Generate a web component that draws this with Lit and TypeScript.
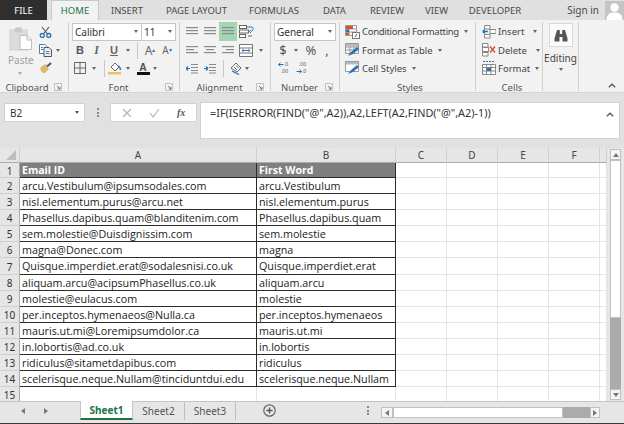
import { LitElement, html, css, svg } from "lit";
import { customElement } from "lit/decorators.js";

const ic = (w: number, h: number, body: any, cls = "") =>
  html`<svg class=${cls} width=${w} height=${h} viewBox="0 0 ${w} ${h}" fill="none">${body}</svg>`;

const caret = html`<span class="caret"></span>`;
const lines = (xs: number[][]) =>
  ic(12, 11, xs.map((p, i) => svg`<rect x=${p[0]} y=${i * 3 + 1} width=${p[1]} height="1.2" fill="#8a8a8a"/>`));

const launcher = html`<span class="launch">${ic(8, 8, svg`<path d="M.5.5H7.5V7.5H.5Z" stroke="#b5b5b5" stroke-width=".8"/><path d="M3 3L6 6M6 3.8V6H3.8" stroke="#666" stroke-width=".9"/>`)}</span>`;

const paste = ic(24, 25, svg`
  <rect x="1" y="4" width="17" height="20" fill="#dcdcdc" stroke="#cfcfcf"/>
  <rect x="6" y="1.5" width="7" height="5" fill="#c9c9c9"/>
  <path d="M11 9.5H18L22.5 14V23.5H11Z" fill="#fff" stroke="#bdbdbd"/>
  <path d="M18 9.5V14H22.5" stroke="#bdbdbd"/>`);
const scissors = ic(13, 12, svg`
  <path d="M3 1L8.5 8M10 1L4.5 8" stroke="#555" stroke-width="1.1"/>
  <circle cx="3.2" cy="9.5" r="2" stroke="#2a72b5" stroke-width="1.3"/>
  <circle cx="9.8" cy="9.5" r="2" stroke="#2a72b5" stroke-width="1.3"/>`);
const copy = ic(13, 13, svg`
  <path d="M.5.5H6L8 2.5V9.5H.5Z" fill="#fff" stroke="#4a7fb0"/>
  <path d="M5 3.5H10L12.5 6V12.5H5Z" fill="#e9f1f8" stroke="#555"/>
  <path d="M2 3.5H4M2 5.5H4M7 7.5H10.5M7 9.5H10.5" stroke="#4a7fb0"/>`);
const painter = ic(13, 12, svg`
  <path d="M1 6L6 2L10 7L5 11.5C3 11 1.5 8.5 1 6Z" fill="#e0b86c"/>
  <path d="M8 4.5L12 1" stroke="#555" stroke-width="2"/>`);
const borderIc = ic(12, 12, svg`<path d="M.5.5H11.5V11.5H.5ZM6 .5V11.5M.5 6H11.5" stroke="#666"/>`);
const fillIc = ic(14, 14, svg`
  <path d="M3 6L7 2L11 6L7 10Z" fill="#fff" stroke="#666"/>
  <path d="M10 5C12 6 12.5 7.5 12.5 9" stroke="#3a7cb8" stroke-width="1.5"/>
  <rect x="0" y="11" width="13" height="2.5" fill="#e8c75a"/>`);
const colorA = html`<span class="col-a">A</span>`;
const wrapIc = ic(15, 13, svg`
  <rect x=".5" y=".5" width="7" height="3" stroke="#666" fill="#fff"/>
  <rect x=".5" y="5" width="9" height="3" stroke="#666" fill="#fff"/>
  <rect x=".5" y="9.5" width="6" height="3" stroke="#666" fill="#fff"/>
  <path d="M8 2H13C14.5 2 14.5 6 12 6.5M12 5L10.5 6.5L12 8M9 11H13" stroke="#2a72b5"/>`);
const mergeIc = ic(14, 13, svg`
  <path d="M.5.5H13.5V12.5H.5ZM.5 4H13.5M.5 9H13.5" stroke="#777" fill="#fff"/>
  <path d="M3 6.5H11M3 6.5L4.5 5.2M3 6.5L4.5 7.8M11 6.5L9.5 5.2M11 6.5L9.5 7.8" stroke="#2a72b5"/>`);
const indentL = ic(12, 11, svg`<path d="M5 1.5H12M5 4.5H12M5 7.5H12M5 10H12" stroke="#8a8a8a"/><path d="M0 5.5H4M0 5.5L2 3.5M0 5.5L2 7.5" stroke="#2a72b5" stroke-width="1.2"/>`);
const indentR = ic(12, 11, svg`<path d="M5 1.5H12M5 4.5H12M5 7.5H12M5 10H12" stroke="#8a8a8a"/><path d="M0 5.5H4M4 5.5L2 3.5M4 5.5L2 7.5" stroke="#2a72b5" stroke-width="1.2"/>`);
const orient = ic(13, 13, svg`<path d="M1 6L6 1L11 6L7 10Z" stroke="#666" fill="#fff"/><path d="M2 9L9 12.5" stroke="#2a72b5" stroke-width="1.3"/><path d="M4 5L7 8M6 3.5L9 6.5" stroke="#666"/>`);
const decInc = html`<span class="dec"><span class="dl"><svg width="6" height="5" viewBox="0 0 6 5" fill="none"><path d="M.5 2.5H5.5M.5 2.5L2.5 .7M.5 2.5L2.5 4.3" stroke="#2a72b5"/></svg>.0</span><span class="dl">.00</span></span>`;
const decDec = html`<span class="dec"><span class="dl">.00</span><span class="dl"><svg width="6" height="5" viewBox="0 0 6 5" fill="none"><path d="M.5 2.5H5.5M5.5 2.5L3.5 .7M5.5 2.5L3.5 4.3" stroke="#2a72b5"/></svg>.0</span></span>`;
const condIc = ic(15, 14, svg`
  <path d="M.5.5H11.5V10.5H.5ZM.5 4H11.5M.5 7H11.5M4 .5V10.5" stroke="#999" fill="#fff"/>
  <rect x="1" y="1" width="7" height="3" fill="#d8502c"/><rect x="1" y="4.5" width="3" height="2.5" fill="#2a72b5"/><rect x="1" y="7.5" width="3" height="2.5" fill="#d8502c"/>
  <rect x="7.5" y="7.5" width="7" height="6" fill="#fff" stroke="#777"/><path d="M10 12L12 9" stroke="#555"/>`);
const tableIc = ic(15, 14, svg`
  <path d="M.5.5H13.5V10.5H.5ZM.5 4H13.5M.5 7H13.5M5 .5V10.5M9 .5V10.5" stroke="#999" fill="#f4f4f4"/>
  <rect x="1" y="1" width="12" height="2.5" fill="#bbb"/>
  <path d="M3 13L6 9L12 4L14 6L8 11Z" fill="#2a72b5"/>`);
const styleIc = ic(15, 14, svg`
  <path d="M.5.5H13.5V10.5H.5Z" stroke="#999" fill="#fff"/><rect x="1" y="1" width="12" height="2.5" fill="#bbb"/>
  <path d="M3 13L6 9L12 4L14 6L8 11Z" fill="#2a72b5"/>`);
const cell3 = (x: number, y: number) => svg`<path d="M${x}.5 ${y}.5H${x + 6}V${y + 4}H${x}.5Z" stroke="#888" fill="#fff"/>`;
const insertIc = ic(14, 14, svg`${cell3(2, 0)}${cell3(2, 9)}<rect x="8" y="4.5" width="6" height="4" stroke="#888" fill="#fff"/><path d="M.5 6.5H6M.5 6.5L3 4.5M.5 6.5L3 8.5" stroke="#2a72b5" stroke-width="1.3"/>`);
const deleteIc = ic(14, 14, svg`${cell3(0, 0)}${cell3(0, 9)}<rect x=".5" y="4.5" width="6" height="4" stroke="#888" fill="#fff"/><path d="M8 3.5L13 9.5M13 3.5L8 9.5" stroke="#d8502c" stroke-width="1.4"/>`);
const formatIc = ic(14, 14, svg`<path d="M1 .5H13" stroke="#2a72b5" stroke-dasharray="2 1"/><path d="M.5 3.5H13.5V13.5H.5ZM.5 6.5H13.5M.5 10H13.5M4.5 3.5V13.5M9 3.5V13.5" stroke="#888" fill="#fff"/><rect x="5" y="7" width="4" height="3" fill="#2a72b5"/>`);
const binoc = ic(14, 13, svg`<path d="M3 1H5.8V5H8.2V1H11L13.5 9.5V12.5H8.5V8H5.5V12.5H.5V9.5Z" fill="#555"/>`);
const person = ic(19, 19, svg`<circle cx="9.5" cy="6.5" r="4.2" fill="#fff"/><path d="M1.5 19C1.5 13 5 11.5 9.5 11.5S17.5 13 17.5 19Z" fill="#fff"/>`);
const corner = ic(10, 10, svg`<path d="M10 0V10H0Z" fill="#bdbdbd"/>`);
const crossIc = ic(10, 10, svg`<path d="M1 1L9 9M9 1L1 9" stroke="#b5b5b5" stroke-width="1.2"/>`);
const checkIc = ic(11, 10, svg`<path d="M1 5L4 9L10 1" stroke="#b5b5b5" stroke-width="1.2"/>`);
const chevron = ic(8, 5, svg`<path d="M.8 4.2L4 1.2L7.2 4.2" stroke="#555" stroke-width="1.3"/>`);
const plusIc = ic(13, 13, svg`<circle cx="6.5" cy="6.5" r="5.7" stroke="#666" stroke-width="1.2"/><path d="M3.5 6.5H9.5M6.5 3.5V9.5" stroke="#555" stroke-width="1.3"/>`);
const tri = (d: string) => ic(6, 6, svg`<path d=${d} fill="#777"/>`);

const TABS: [string, number][] = [["INSERT", 56], ["PAGE LAYOUT", 83], ["FORMULAS", 72], ["DATA", 49], ["REVIEW", 56], ["VIEW", 43], ["DEVELOPER", 74]];
const ROWS: [string, string][] = [
  ["Email ID", "First Word"],
  ["arcu.Vestibulum@ipsumsodales.com", "arcu.Vestibulum"],
  ["nisl.elementum.purus@arcu.net", "nisl.elementum.purus"],
  ["Phasellus.dapibus.quam@blanditenim.com", "Phasellus.dapibus.quam"],
  ["sem.molestie@Duisdignissim.com", "sem.molestie"],
  ["magna@Donec.com", "magna"],
  ["Quisque.imperdiet.erat@sodalesnisi.co.uk", "Quisque.imperdiet.erat"],
  ["aliquam.arcu@acipsumPhasellus.co.uk", "aliquam.arcu"],
  ["molestie@eulacus.com", "molestie"],
  ["per.inceptos.hymenaeos@Nulla.ca", "per.inceptos.hymenaeos"],
  ["mauris.ut.mi@Loremipsumdolor.ca", "mauris.ut.mi"],
  ["in.lobortis@ad.co.uk", "in.lobortis"],
  ["ridiculus@sitametdapibus.com", "ridiculus"],
  ["scelerisque.neque.Nullam@tinciduntdui.edu", "scelerisque.neque.Nullam"],
];

@customElement("app-root")
export class AppRoot extends LitElement {
  static styles = css`
    :host { display: block; width: 624px; height: 424px; overflow: hidden; background: #e1e1e1; color: #444;
      font-family: "Noto Sans", "Open Sans", sans-serif; font-size: 10px; }
    * { box-sizing: border-box; }
    svg { display: block; flex: none; }
    .tabs { display: flex; height: 20px; background: #e0e0e0; align-items: stretch; font-size: 9.5px; color: #4a4a4a; }
    .tab { display: flex; align-items: center; justify-content: center; }
    .file { width: 47px; margin-right: 4px; background: #2f2f2f; color: #fff; }
    .home { width: 48px; background: #f2f2f2; color: #217346; border: 1px solid #c9c9c9; border-bottom: 0; }
    .signin { margin-left: auto; display: flex; align-items: center; gap: 6px; font-size: 10px; }
    .avatar { background: #c4c4c4; width: 19px; height: 19px; }

    .ribbon { display: flex; height: 73px; background: #f2f2f2; border-bottom: 1px solid #d4d4d4; }
    .g { display: flex; flex-direction: column; border-right: 1px solid #d0d0d0; margin: 2px 0 1px; flex: none; }
    .body { height: 56px; display: flex; flex-direction: column; flex: none; }
    .lab { display: flex; align-items: center; height: 14px; margin-top: 1px; padding-top: 2px; font-size: 9.5px; color: #555; }
    .lab > span:first-child { flex: 1; text-align: center; }
    .launch { width: 14px; display: flex; justify-content: flex-start; }
    .clip { width: 69px; } .font { width: 111px; padding-left: 3px; } .align { width: 91px; padding-left: 3px; }
    .num { width: 69px; padding-left: 3px; } .sty { width: 136px; padding-left: 5px; } .cel { width: 67px; padding-left: 6px; }
    .edi { width: 36px; }
    .rest { flex: 1; display: flex; align-items: flex-end; justify-content: flex-end; padding: 0 8px 4px 0; }
    .row { display: flex; align-items: center; height: 18px; }
    .row.first { height: 19px; }
    .b { display: flex; align-items: center; justify-content: center; flex: none; height: 18px; }
    .w6 { width: 6px; } .w8 { width: 8px; } .w9 { width: 9px; } .w10 { width: 10px; } .w12 { width: 12px; } .w14 { width: 14px; }
    .w16 { width: 16px; } .w17 { width: 17px; } .w18 { width: 18px; } .w19 { width: 19px; } .w22 { width: 22px; }
    .caret { width: 0; height: 0; border: 2.5px solid transparent; border-top: 3px solid #666; border-bottom: 0; display: inline-block; flex: none; }
    .sep { width: 1px; height: 17px; background: #c8c8c8; }
    .select { height: 18px; background: #fff; border: 1px solid #c6c6c6; display: flex; align-items: center; justify-content: space-between;
      padding: 0 3px 0 2px; font-size: 10px; color: #333; flex: none; }
    .s70 { width: 70px; } .s35 { width: 35px; margin-left: -1px; } .s62 { width: 62px; }
    .bold { font-weight: 700; font-family: "Liberation Sans", sans-serif; font-size: 11px; color: #555; }
    .ital { font-style: italic; font-family: "Liberation Serif", serif; font-size: 12px; font-weight: 700; color: #666; }
    .und { text-decoration: underline; font-family: "Liberation Sans", sans-serif; font-size: 11px; font-weight: 700; color: #666; }
    .bigA { font-size: 12px; color: #666; }
    .smallA { font-size: 10px; color: #666; }
    .bigA sup, .smallA sup { font-size: 6px; color: #2a72b5; line-height: 0; }
    .col-a { display: block; font-size: 10px; line-height: 10px; color: #555; border-bottom: 3px solid #111; width: 13px; text-align: center; font-weight: 700; }
    .sym { font-size: 13px; color: #555; }
    .green { background: #a4d6b4; height: 19px; }
    .dec { display: flex; flex-direction: column; align-items: flex-end; font-size: 5px; line-height: 7px; color: #555; }
    .dl { display: flex; align-items: center; height: 7px; }
    .clipwrap { flex-direction: row; }
    .pastecol { width: 34px; padding-left: 9px; display: flex; flex-direction: column; align-items: flex-start; color: #a0a0a0; padding-top: 4px; }
    .pastecol span.t { font-size: 10px; line-height: 13px; margin-top: 3px; margin-left: -1px; }
    .pastecol .caret { margin: 5px 0 0 9px; border-top-color: #aaa; }
    .small { padding-left: 5px; }
    .lrow { display: flex; align-items: center; gap: 2px; height: 18px; font-size: 9.5px; color: #444; white-space: nowrap; }
    .lrow.first { height: 19px; }
    .lrow.tight { letter-spacing: -0.3px; }
    .lrow .caret { margin-left: 3px; }
    .lrow .caret.far { margin-left: 7px; }
    .editwrap { display: flex; flex-direction: column; align-items: center; }
    .ebox { width: 24px; height: 24px; background: #fbfbfb; border: 1px solid #d8d8d8; display: flex; align-items: center; justify-content: center; margin-top: 1px; flex: none; }
    .etext { font-size: 10px; margin-top: 4px; line-height: 14px; }
    .editwrap .caret { margin-top: 3px; }

    .fbar { display: flex; height: 55px; padding: 9px 4px 0 4px; background: #e1e1e1; align-items: flex-start; }
    .namebox { width: 81px; height: 19px; margin-top: 1px; background: #fff; border: 1px solid #d2d2d2; display: flex; align-items: center; justify-content: space-between;
      padding: 0 5px 0 5px; font-size: 10px; color: #333; }
    .namebox .caret { border-top-color: #555; }
    .dots { width: 25px; margin-top: 6px; display: flex; flex-direction: column; gap: 1.5px; align-items: center; }
    .dots i { width: 2px; height: 2px; background: #888; display: block; }
    .fxbox { width: 87px; height: 19px; margin-top: 1px; background: #fff; border: 1px solid #d2d2d2; display: flex; align-items: center; padding-left: 11px; gap: 17px; }
    .fx { font-family: "Liberation Serif", serif; font-style: italic; font-weight: 700; font-size: 10px; color: #555; }
    .formula { width: 420px; margin-left: 3px; height: 37px; background: #fff; border: 1px solid #d2d2d2; padding: 2px 5px 0 9px; display: flex; justify-content: space-between; font-size: 10.85px; color: #333; white-space: nowrap; }
    .formula svg { margin-top: 7px; }

    .main { display: flex; height: 253px; }
    .sheet { width: 607px; height: 253px; overflow: hidden; display: grid; grid-template-columns: 20px 237px 139px 51px 51px 51px 51px 7px; grid-template-rows: 15px 15px; grid-auto-rows: 16.1px; background: #fff; }
    .ch { background: #e6e6e6; border-right: 1px solid #cfcfcf; border-bottom: 1px solid #ababab; display: flex; align-items: center; justify-content: center; font-size: 10px; color: #444; }
    .corner { justify-content: flex-end; padding-right: 3px; }
    .rh { background: #e6e6e6; border-right: 1px solid #ababab; border-bottom: 1px solid #cfcfcf; display: flex; align-items: center; justify-content: center; font-size: 10px; color: #333; padding-top: 1px; }
    .c { border-right: 1px solid #e4e4e4; border-bottom: 1px solid #e4e4e4; }
    .d { border-right: 1px solid #2b2b2b; border-bottom: 1px solid #2b2b2b; font-family: "Open Sans", sans-serif; font-size: 10.75px; line-height: 15px; color: #222; padding: 1px 0 0 2px; white-space: nowrap; overflow: hidden; }
    .dh { background: #7f7f7f; color: #fff; font-weight: 700; font-size: 10.5px; line-height: 15px; padding-top: 0; }
    .vs { width: 17px; padding: 1px 3px 0; background: #e6e6e6; display: flex; flex-direction: column; }
    .sb { width: 11px; height: 11px; background: #f4f4f4; border: 1px solid #c0c0c0; display: flex; align-items: center; justify-content: center; flex: none; }
    .vthumb { height: 158px; background: #fff; border: 1px solid #c0c0c0; flex: none; }
    .vtrack { height: 71px; background: #ababab; flex: none; }

    .foot { display: flex; height: 22px; background: #e6e6e6; border-top: 1px solid #c4c4c4; align-items: flex-start; font-size: 10px; color: #555; }
    .navs { width: 80px; display: flex; padding: 6px 0 0 20px; gap: 17px; }
    .st { height: 18px; display: flex; align-items: center; justify-content: center; border-right: 1px solid #bdbdbd; margin-top: 0; }
    .st1 { width: 53px; background: #fff; color: #217346; font-weight: 700; border: 1px solid #c4c4c4; border-top: 0; border-bottom: 2px solid #217346; height: 19px; margin-top: -1px; }
    .st2 { width: 52px; } .st3 { width: 51px; }
    .plus { margin: 2px 0 0 27px; width: 13px; }
    .hdots { margin: 4px 0 0 87px; gap: 1.5px; width: 10px; display: flex; flex-direction: column; align-items: center; }
    .hdots i { width: 2px; height: 2px; background: #888; display: block; }
    .hs { display: flex; margin: 5px 0 0 8px; height: 11px; width: 219px; }
    .hthumb { width: 170px; background: #fff; border: 1px solid #c0c0c0; }
    .htrack { width: 27px; background: #ababab; }
    .hs .sb { width: 12px; }
    .hs .sb.end { width: 10px; }
    .edge { height: 1px; background: #3a3a3a; }
  `;

  render() {
    return html`
      <div class="tabs">
        <div class="tab file">FILE</div>
        <div class="tab home">HOME</div>
        ${TABS.map(([t, w]) => html`<div class="tab" style="width:${w}px">${t}</div>`)}
        <div class="signin">Sign in <span class="avatar">${person}</span></div>
      </div>
      <div class="ribbon">
        <div class="g clip">
          <div class="body clipwrap">
            <div class="pastecol">${paste}<span class="t">Paste</span>${caret}</div>
            <div class="small">
              <div class="row first">${scissors}</div>
              <div class="row">${copy}<span class="b w12">${caret}</span></div>
              <div class="row">${painter}</div>
            </div>
          </div>
          <div class="lab"><span>Clipboard</span>${launcher}</div>
        </div>
        <div class="g font">
          <div class="body">
            <div class="row first"><div class="select s70">Calibri ${caret}</div><div class="select s35">11 ${caret}</div></div>
            <div class="row">
              <span class="b w16 bold">B</span><span class="b w17 ital">I</span><span class="b w18 und">U</span><span class="b w10">${caret}</span>
              <span class="b w8"><span class="sep"></span></span><span class="b w18 bigA">A<sup>▴</sup></span><span class="b w16 smallA">A<sup>▾</sup></span>
            </div>
            <div class="row">
              <span class="b w16">${borderIc}</span><span class="b w12">${caret}</span><span class="b w8"><span class="sep"></span></span>
              <span class="b w14">${fillIc}</span><span class="b w12">${caret}</span><span class="b w18">${colorA}</span><span class="b w6">${caret}</span>
            </div>
          </div>
          <div class="lab"><span>Font</span>${launcher}</div>
        </div>
        <div class="g align">
          <div class="body">
            <div class="row first">
              <span class="b w18">${lines([[0, 12], [0, 12], [0, 12]])}</span><span class="b w18">${lines([[0, 12], [0, 12], [0, 12]])}</span>
              <span class="b w18 green">${lines([[0, 12], [0, 12], [0, 12]])}</span><span class="b w19">${wrapIc}</span>
            </div>
            <div class="row">
              <span class="b w18">${lines([[0, 12], [0, 8], [0, 12]])}</span><span class="b w18">${lines([[0, 12], [2, 8], [0, 12]])}</span>
              <span class="b w18">${lines([[0, 12], [4, 8], [0, 12]])}</span><span class="b w18">${mergeIc}</span><span class="b w12">${caret}</span>
            </div>
            <div class="row">
              <span class="b w18">${indentL}</span><span class="b w18">${indentR}</span><span class="b w9"><span class="sep"></span></span>
              <span class="b w16">${orient}</span><span class="b w6">${caret}</span>
            </div>
          </div>
          <div class="lab"><span>Alignment</span>${launcher}</div>
        </div>
        <div class="g num">
          <div class="body">
            <div class="row first"><div class="select s62">General ${caret}</div></div>
            <div class="row"><span class="b w18 sym">$</span><span class="b w8">${caret}</span><span class="b w22 sym">%</span><span class="b w10 sym">,</span></div>
            <div class="row"><span class="b w18">${decInc}</span><span class="b w18">${decDec}</span></div>
          </div>
          <div class="lab"><span>Number</span>${launcher}</div>
        </div>
        <div class="g sty">
          <div class="body">
            <div class="lrow first tight">${condIc}Conditional Formatting ${caret}</div>
            <div class="lrow">${tableIc}Format as Table ${caret}</div>
            <div class="lrow">${styleIc}Cell Styles ${caret}</div>
          </div>
          <div class="lab"><span>Styles</span></div>
        </div>
        <div class="g cel">
          <div class="body">
            <div class="lrow first">${insertIc}Insert <span class="caret far"></span></div>
            <div class="lrow">${deleteIc}Delete <span class="caret far"></span></div>
            <div class="lrow">${formatIc}Format ${caret}</div>
          </div>
          <div class="lab"><span>Cells</span></div>
        </div>
        <div class="g edi">
          <div class="body editwrap"><div class="ebox">${binoc}</div><div class="etext">Editing</div>${caret}</div>
        </div>
        <div class="rest">${chevron}</div>
      </div>
      <div class="fbar">
        <div class="namebox">B2 ${caret}</div>
        <div class="dots"><i></i><i></i><i></i></div>
        <div class="fxbox">${crossIc}${checkIc}<span class="fx">fx</span></div>
        <div class="formula"><span>=IF(ISERROR(FIND("@",A2)),A2,LEFT(A2,FIND("@",A2)-1))</span>${chevron}</div>
      </div>
      <div class="main">
        <div class="sheet">
          <div class="ch corner">${corner}</div>
          ${["A", "B", "C", "D", "E", "F", ""].map((h) => html`<div class="ch">${h}</div>`)}
          ${ROWS.map(([a, b], i) => html`
            <div class="rh">${i + 1}</div>
            <div class="d ${i === 0 ? "dh" : ""}">${a}</div>
            <div class="d ${i === 0 ? "dh" : ""}">${b}</div>
            ${[0, 1, 2, 3, 4].map(() => html`<div class="c"></div>`)}
          `)}
          <div class="rh">15</div>
          ${[0, 1, 2, 3, 4, 5, 6].map(() => html`<div class="c"></div>`)}
        </div>
        <div class="vs">
          <div class="sb">${tri("M3 1L6 5H0Z")}</div>
          <div class="vthumb"></div>
          <div class="vtrack"></div>
          <div class="sb">${tri("M0 1H6L3 5Z")}</div>
        </div>
      </div>
      <div class="foot">
        <div class="navs">${tri("M5 0V6L1 3Z")}${tri("M1 0V6L5 3Z")}</div>
        <div class="st st1">Sheet1</div>
        <div class="st st2">Sheet2</div>
        <div class="st st3">Sheet3</div>
        <div class="plus">${plusIc}</div>
        <div class="hdots"><i></i><i></i><i></i></div>
        <div class="hs">
          <div class="sb">${tri("M5 0V6L1 3Z")}</div>
          <div class="hthumb"></div>
          <div class="htrack"></div>
          <div class="sb end">${tri("M1 0V6L5 3Z")}</div>
        </div>
      </div>
      <div class="edge"></div>
    `;
  }
}
